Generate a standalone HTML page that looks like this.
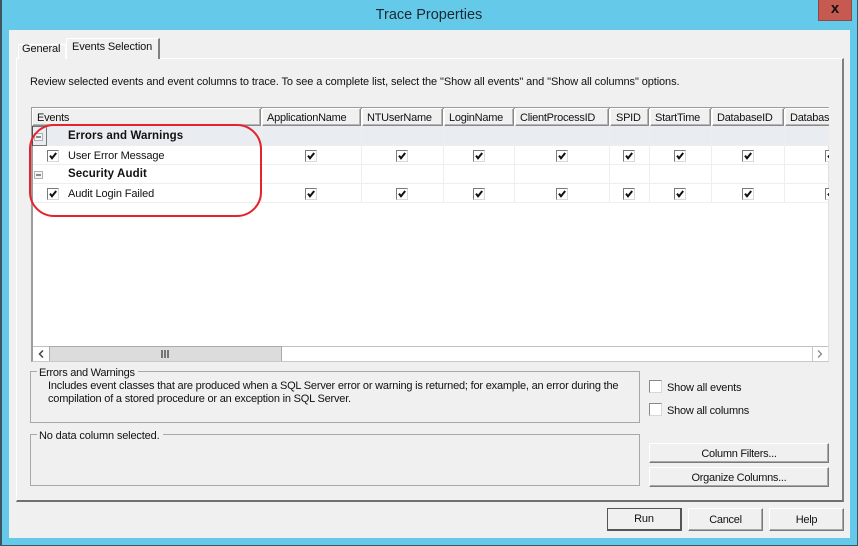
<!DOCTYPE html>
<html><head><meta charset="utf-8">
<style>
html,body{margin:0;padding:0}
body{width:858px;height:546px;overflow:hidden;position:relative;background:#65c9ea;font-family:"Liberation Sans",sans-serif;font-size:11px;letter-spacing:-0.11px;color:#111}
div{position:absolute;box-sizing:border-box;white-space:nowrap}
.t{line-height:14px}
.b{font-size:11.5px;font-weight:bold;letter-spacing:0.1px}
.hd{top:108px;height:18px;background:#f0f0f0;border:1px solid;border-color:#fff #8a8a8a #8a8a8a #fff;line-height:18px;padding-left:4px;letter-spacing:-0.25px;box-shadow:inset 0 -1px 0 #b5b5b5,inset -1px 0 0 #b5b5b5;overflow:hidden}
.gb{border:1px solid #a8a8a8}
.btn{background:#f0f0f0;border:1px solid;border-color:#fff #7a7a7a #7a7a7a #fff;box-shadow:inset -1px -1px 0 #a8a8a8;text-align:center;letter-spacing:-0.28px}
.cb{width:13px;height:13px;background:#fff;border:1px solid;border-color:#8a8a8a #d8d8d8 #d8d8d8 #8a8a8a}
.v{top:126px;width:1px;height:77px;background:#eeeeee}
.h{left:33px;width:796px;height:1px;background:#eeeeee}
</style></head><body>
<div style="left:0;top:0;width:2px;height:546px;background:#3f5560"></div>
<div style="left:857px;top:0;width:1px;height:546px;background:#3f5560"></div>
<div style="left:0;top:545px;width:858px;height:1px;background:#3f5560"></div>
<div style="left:0;top:6px;width:858px;text-align:center;font-size:14.5px;letter-spacing:0;line-height:18px;color:#1a2a33">Trace Properties</div>
<div style="left:818px;top:0;width:34px;height:21px;background:#c75a50;border:1px solid #8a4a48;border-top:0;text-align:center;font:bold 15px/17px 'Liberation Sans',sans-serif;letter-spacing:0;color:#111">x</div>

<div style="left:9px;top:30px;width:841px;height:508px;background:#f0f0f0"></div>

<!-- tab panel -->
<div style="left:16px;top:58px;width:828px;height:444px;background:#f0f0f0;border:1px solid;border-color:#fff #808080 #707070 #fff;border-width:1px 2px 2px 1px"></div>
<div style="left:18px;top:44px;width:48px;height:15px;background:#f0f0f0;border:1px solid #fff;border-bottom:0"></div>
<div class="t" style="left:22px;top:42px">General</div>
<div style="left:66px;top:38px;width:94px;height:21px;background:#f0f0f0;border:1px solid #fff;border-right:2px solid #808080;border-bottom:0"></div>
<div class="t" style="left:72px;top:40px">Events Selection</div>

<div class="t" style="left:30px;top:75px;letter-spacing:-0.1px">Review selected events and event columns to trace. To see a complete list, select the "Show all events" and "Show all columns" options.</div>

<!-- grid -->
<div style="left:31px;top:107px;width:798px;height:255px;background:#fff;border-style:solid;border-width:2px 1px 1px 2px;border-color:#9c9c9c #e0e0e0 #c8c8c8 #9c9c9c"></div>
<div style="left:33px;top:126px;width:796px;height:19px;background:#e9edf1"></div>
<div class="h" style="top:145px"></div>
<div class="h" style="top:164px"></div>
<div class="h" style="top:183px"></div>
<div class="h" style="top:202px"></div>
<div class="v" style="left:261px"></div>
<div class="v" style="left:361px"></div>
<div class="v" style="left:443px"></div>
<div class="v" style="left:514px"></div>
<div class="v" style="left:609px"></div>
<div class="v" style="left:649px"></div>
<div class="v" style="left:711px"></div>
<div class="v" style="left:784px"></div>

<div class="hd" style="left:32px;width:229px">Events</div>
<div class="hd" style="left:262px;width:99px">ApplicationName</div>
<div class="hd" style="left:362px;width:81px">NTUserName</div>
<div class="hd" style="left:444px;width:70px">LoginName</div>
<div class="hd" style="left:515px;width:94px">ClientProcessID</div>
<div class="hd" style="left:610px;width:39px;padding-left:5px">SPID</div>
<div class="hd" style="left:650px;width:61px">StartTime</div>
<div class="hd" style="left:712px;width:72px">DatabaseID</div>
<div class="hd" style="left:785px;width:44px;border-right:0;box-shadow:inset 0 -1px 0 #b5b5b5">Databas</div>

<div class="t b" style="left:68px;top:129px">Errors and Warnings</div>
<div class="t" style="left:68px;top:149px">User Error Message</div>
<div class="t b" style="left:68px;top:167px">Security Audit</div>
<div class="t" style="left:68px;top:187px">Audit Login Failed</div>

<!-- scrollbar -->
<div style="left:33px;top:346px;width:795px;height:15px;background:#fff;border-top:1px solid #c0c0c0"></div>
<div style="left:49px;top:346px;width:233px;height:15px;background:#dcdcdc;border:1px solid #aaa;border-width:1px 1px 0 1px"></div>
<div style="left:812px;top:346px;width:1px;height:15px;background:#c8c8c8"></div>

<!-- lower groups -->
<div class="gb" style="left:30px;top:371px;width:610px;height:52px"></div>
<div class="t" style="left:37px;top:366px;background:#f0f0f0;padding:0 3px 0 2px;letter-spacing:-0.25px">Errors and Warnings</div>
<div class="t" style="left:48px;top:380px;line-height:13px;letter-spacing:-0.2px">Includes event classes that are produced when a SQL Server error or warning is returned; for example, an error during the<br>compilation of a stored procedure or an exception in SQL Server.</div>
<div class="gb" style="left:30px;top:434px;width:610px;height:52px"></div>
<div class="t" style="left:37px;top:429px;background:#f0f0f0;padding:0 3px 0 2px;letter-spacing:-0.15px">No data column selected.</div>

<div class="cb" style="left:649px;top:380px"></div>
<div class="t" style="left:667px;top:381px;letter-spacing:-0.18px">Show all events</div>
<div class="cb" style="left:649px;top:403px"></div>
<div class="t" style="left:667px;top:404px;letter-spacing:-0.22px">Show all columns</div>

<div class="btn" style="left:649px;top:443px;width:180px;height:20px;line-height:20px">Column Filters...</div>
<div class="btn" style="left:649px;top:467px;width:180px;height:20px;line-height:20px">Organize Columns...</div>

<div style="left:607px;top:508px;width:75px;height:23px;border:1px solid #555;border-width:1px 2px 2px 1px;background:#f0f0f0;text-align:center;line-height:21px">Run</div>
<div class="btn" style="left:688px;top:508px;width:75px;height:23px;line-height:22px">Cancel</div>
<div class="btn" style="left:769px;top:508px;width:75px;height:23px;line-height:22px">Help</div>

<svg width="858" height="546" style="position:absolute;left:0;top:0" xmlns="http://www.w3.org/2000/svg">
<defs>
<symbol id="c" width="12" height="12" viewBox="0 0 12 12">
<rect x="0.5" y="0.5" width="11" height="11" fill="#fff" stroke="#d8d8d8"/>
<path d="M0.5 11.5V0.5H11.5" fill="none" stroke="#7a7a7a"/>
<path d="M3 5.6L5 8.2 9.2 3" fill="none" stroke="#111" stroke-width="2"/>
</symbol>
<clipPath id="cl"><rect x="0" y="0" width="829" height="546"/></clipPath>
</defs>
<use href="#c" x="47" y="150"/><use href="#c" x="47" y="188"/>
<g clip-path="url(#cl)">
<use href="#c" x="305" y="150"/><use href="#c" x="396" y="150"/><use href="#c" x="473" y="150"/><use href="#c" x="556" y="150"/><use href="#c" x="623" y="150"/><use href="#c" x="674" y="150"/><use href="#c" x="742" y="150"/><use href="#c" x="825" y="150"/>
<use href="#c" x="305" y="188"/><use href="#c" x="396" y="188"/><use href="#c" x="473" y="188"/><use href="#c" x="556" y="188"/><use href="#c" x="623" y="188"/><use href="#c" x="674" y="188"/><use href="#c" x="742" y="188"/><use href="#c" x="825" y="188"/>
</g>
<!-- tree toggles -->
<rect x="34.5" y="133.5" width="8" height="7" fill="#f4f4f4" stroke="#b0b0b0"/><path d="M36 137h5" stroke="#222"/>
<rect x="34.5" y="171.5" width="8" height="7" fill="#f4f4f4" stroke="#b0b0b0"/><path d="M36 175h5" stroke="#222"/>
<rect x="32.5" y="126.5" width="14" height="19" fill="none" stroke="#000" stroke-dasharray="1 1"/>
<!-- scrollbar glyphs -->
<path d="M43 350.5l-3.5 3.5 3.5 3.5" fill="none" stroke="#444" stroke-width="1.5"/>
<path d="M818 350.5l3.5 3.5-3.5 3.5" fill="none" stroke="#888" stroke-width="1.3"/>
<path d="M162 350v8M165 350v8M168 350v8" stroke="#555" stroke-width="1.5"/>
<!-- red highlight -->
<rect x="30" y="125" width="231" height="91" rx="24" ry="24" fill="none" stroke="#e3242f" stroke-width="2"/>
</svg>
</body></html>
